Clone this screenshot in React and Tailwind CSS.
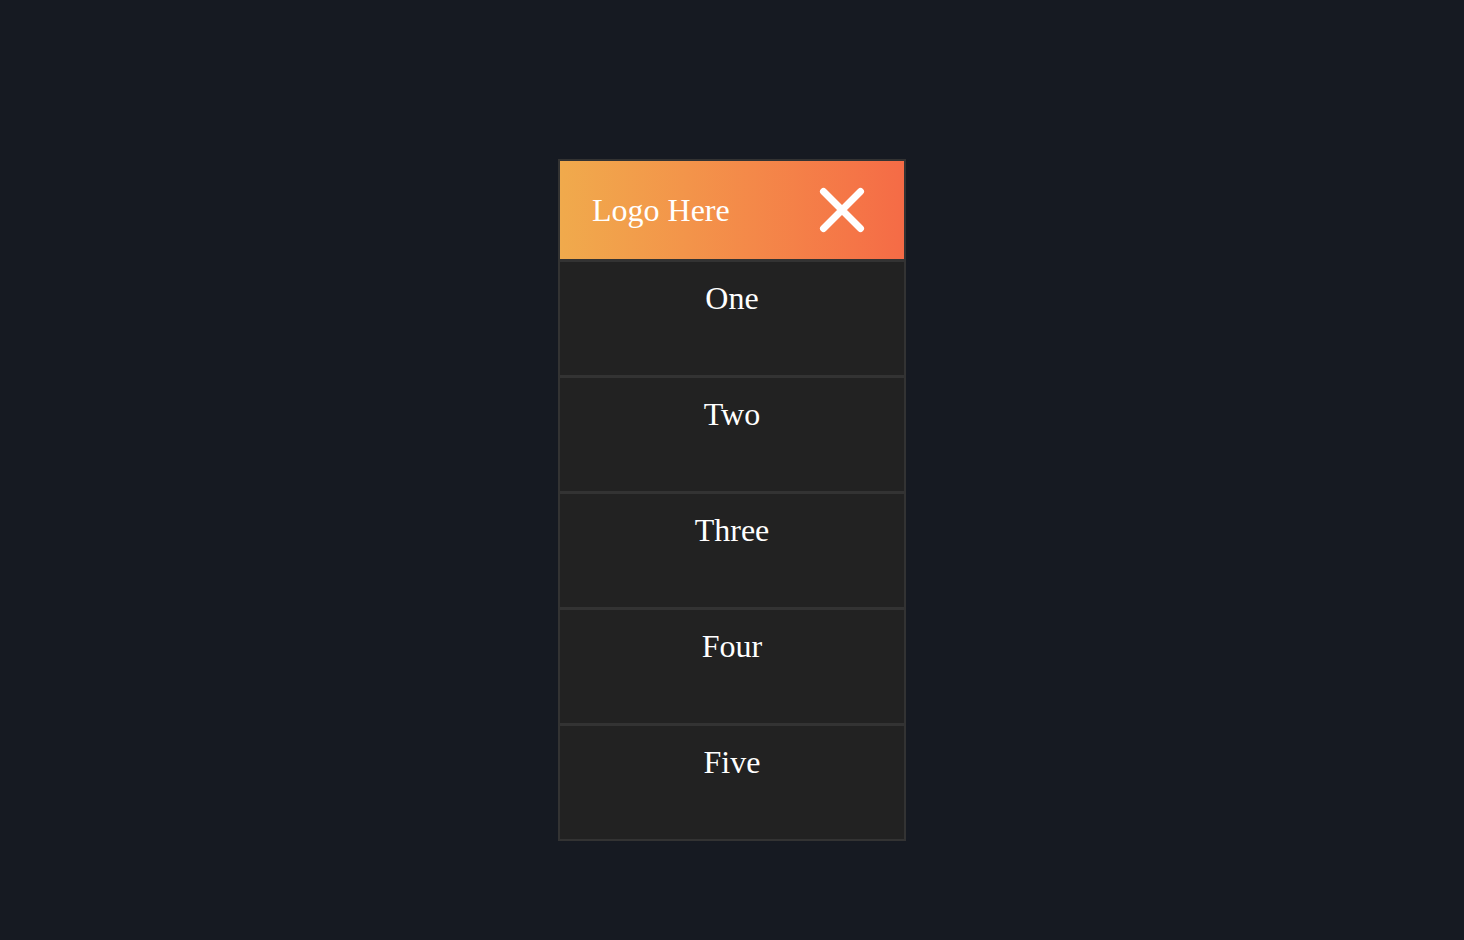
import React from 'react';

const items = ['One', 'Two', 'Three', 'Four', 'Five'];

const CloseIcon = () => (
  <svg width="48" height="48" viewBox="0 0 48 48" fill="none">
    <path
      d="M5.5 5.5L42.5 42.5M42.5 5.5L5.5 42.5"
      stroke="white"
      strokeWidth="7"
      strokeLinecap="round"
    />
  </svg>
);

export default function App() {
  return (
    <div className="min-h-screen w-full bg-[#161a22] flex justify-center pt-[159px] font-['Liberation_Serif',serif]">
      <div className="w-[348px] h-fit border-2 border-[#333333] bg-[#333333] flex flex-col gap-[3px]">
        {/* Header */}
        <div className="h-[98px] flex items-center justify-between pl-[32px] pr-[38px] bg-gradient-to-r from-[#f0aa4c] to-[#f56b46]">
          <span className="text-[32px] leading-none text-white">Logo Here</span>
          <CloseIcon />
        </div>

        {/* Menu items */}
        {items.map((label) => (
          <div
            key={label}
            className="h-[113px] bg-[#222222] text-center pt-[12px] text-[32px] text-white"
          >
            {label}
          </div>
        ))}
      </div>
    </div>
  );
}
